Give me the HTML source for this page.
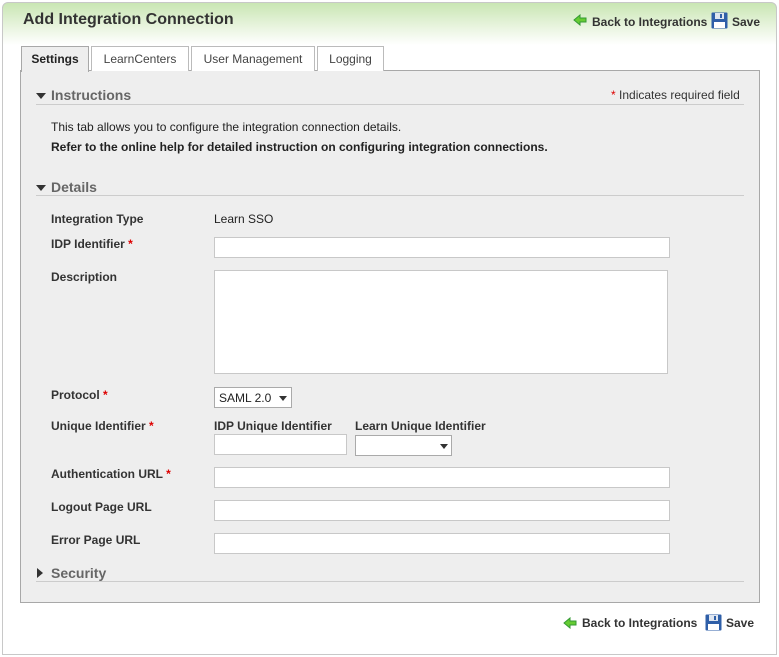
<!DOCTYPE html>
<html><head><style>
*{box-sizing:border-box;margin:0;padding:0}
body{width:779px;height:657px;background:#fff;font-family:"Liberation Sans",Arial,sans-serif;font-size:12px;color:#222;position:relative;overflow:hidden}
.a{position:absolute}
.outer{left:2px;top:2px;width:775px;height:653px;border:1px solid #c8c8c8;border-radius:6px 6px 0 0;background:linear-gradient(#c9e6b3 0,#eaf5e1 25px,#fff 42px,#fff 100%)}
.title{left:23px;top:11px;font-size:16px;font-weight:bold;color:#333}
.lnk{font-weight:bold;color:#333;font-size:12px}
.panel{left:20px;top:70px;width:740px;height:533px;background:#eee;border:1px solid #a8a8a8}
.tab{top:46px;height:25px;border:1px solid #bbb;border-bottom:none;background:#fff;color:#444;font-size:12px;text-align:center;line-height:25px}
.sec{font-size:14px;font-weight:bold;color:#666}
.line{left:36px;width:708px;height:1px;background:#ccc}
.lbl{left:51px;font-weight:bold;color:#333}
.req{color:#d00}
.in{background:#fff;border:1px solid #c8c8c8}
.tri{width:0;height:0;border-left:5px solid transparent;border-right:5px solid transparent;border-top:6px solid #333}
.trr{width:0;height:0;border-top:5px solid transparent;border-bottom:5px solid transparent;border-left:6px solid #333}
</style></head><body>
<div class="a outer"></div>
<div class="a title">Add Integration Connection</div>
<svg class="a" style="left:573px;top:14px" width="14" height="12"><path d="M1 6 L7 1 L7 4 L13 4 L13 8 L7 8 L7 11 Z" fill="#6c3" stroke="#393" stroke-width="1"/></svg>
<div class="a lnk" style="left:592px;top:15px">Back to Integrations</div>
<svg class="a" style="left:711px;top:12px" width="17" height="17"><rect x="0.5" y="0.5" width="16" height="16" rx="1" fill="#2f5fa8"/><rect x="4" y="1" width="9" height="6" fill="#dfe6f0"/><rect x="9" y="2" width="2" height="4" fill="#2f5fa8"/><rect x="3" y="10" width="11" height="6" fill="#fff"/></svg>
<div class="a lnk" style="left:732px;top:15px">Save</div>

<div class="a panel"></div>
<div class="a tab" style="left:21px;width:68px;background:#eee;border-color:#a8a8a8;height:26px;font-weight:bold;color:#222">Settings</div>
<div class="a tab" style="left:91px;width:98px">LearnCenters</div>
<div class="a tab" style="left:191px;width:124px">User Management</div>
<div class="a tab" style="left:317px;width:67px">Logging</div>

<div class="a tri" style="left:36px;top:93px"></div>
<div class="a sec" style="left:51px;top:87px">Instructions</div>
<div class="a" style="left:611px;top:88px;color:#333"><span class="req">*</span> Indicates required field</div>
<div class="a line" style="top:104px"></div>
<div class="a" style="left:51px;top:120px">This tab allows you to configure the integration connection details.</div>
<div class="a" style="left:51px;top:140px;font-weight:bold">Refer to the online help for detailed instruction on configuring integration connections.</div>

<div class="a tri" style="left:36px;top:185px"></div>
<div class="a sec" style="left:51px;top:179px">Details</div>
<div class="a line" style="top:195px"></div>

<div class="a lbl" style="top:212px">Integration Type</div>
<div class="a" style="left:214px;top:212px">Learn SSO</div>
<div class="a lbl" style="top:237px">IDP Identifier <span class="req">*</span></div>
<div class="a in" style="left:214px;top:237px;width:456px;height:21px"></div>
<div class="a lbl" style="top:270px">Description</div>
<div class="a in" style="left:214px;top:270px;width:454px;height:104px"></div>
<div class="a lbl" style="top:388px">Protocol <span class="req">*</span></div>
<div class="a in" style="left:214px;top:387px;width:78px;height:21px;border-color:#aaa"><span class="a" style="left:4px;top:3px">SAML 2.0</span><div class="a tri" style="left:64px;top:8px;border-width:5px 4px 0 4px"></div></div>
<div class="a lbl" style="top:419px">Unique Identifier <span class="req">*</span></div>
<div class="a" style="left:214px;top:419px;font-weight:bold;color:#333">IDP Unique Identifier</div>
<div class="a" style="left:355px;top:419px;font-weight:bold;color:#333">Learn Unique Identifier</div>
<div class="a in" style="left:214px;top:434px;width:133px;height:21px"></div>
<div class="a in" style="left:355px;top:435px;width:97px;height:21px;border-color:#aaa"><div class="a tri" style="left:84px;top:8px;border-width:5px 4px 0 4px"></div></div>
<div class="a lbl" style="top:467px">Authentication URL <span class="req">*</span></div>
<div class="a in" style="left:214px;top:467px;width:456px;height:21px"></div>
<div class="a lbl" style="top:500px">Logout Page URL</div>
<div class="a in" style="left:214px;top:500px;width:456px;height:21px"></div>
<div class="a lbl" style="top:533px">Error Page URL</div>
<div class="a in" style="left:214px;top:533px;width:456px;height:21px"></div>

<div class="a trr" style="left:37px;top:568px"></div>
<div class="a sec" style="left:51px;top:565px">Security</div>
<div class="a line" style="top:581px"></div>

<svg class="a" style="left:563px;top:617px" width="14" height="12"><path d="M1 6 L7 1 L7 4 L13 4 L13 8 L7 8 L7 11 Z" fill="#6c3" stroke="#393" stroke-width="1"/></svg>
<div class="a lnk" style="left:582px;top:616px">Back to Integrations</div>
<svg class="a" style="left:705px;top:614px" width="17" height="17"><rect x="0.5" y="0.5" width="16" height="16" rx="1" fill="#2f5fa8"/><rect x="4" y="1" width="9" height="6" fill="#dfe6f0"/><rect x="9" y="2" width="2" height="4" fill="#2f5fa8"/><rect x="3" y="10" width="11" height="6" fill="#fff"/></svg>
<div class="a lnk" style="left:726px;top:616px">Save</div>
</body></html>
